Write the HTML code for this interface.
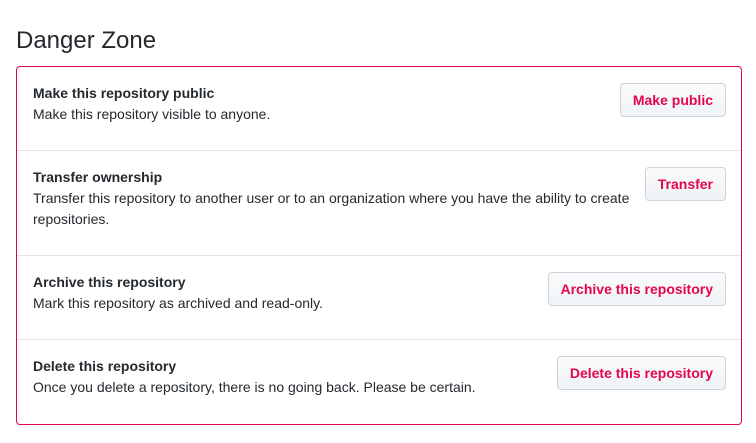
<!DOCTYPE html>
<html><head><style>
body{margin:0;background:#fff;font-family:"Liberation Sans",sans-serif;color:#24292e;}
h2{position:absolute;left:16px;top:26px;margin:0;font-size:24px;font-weight:400;line-height:30px;}
.box{position:absolute;left:16px;top:66px;width:724px;height:357px;border:1px solid #e4064a;border-radius:4px;}
.row{position:relative;border-top:1px solid #e1e4e8;padding:16px 16px 0 16px;box-sizing:border-box;}
.row:first-child{border-top:none;}
.t{font-weight:700;font-size:14px;line-height:21px;}
.d{font-size:14px;line-height:21px;width:610px;}
.b{position:absolute;right:15px;top:16px;height:34px;box-sizing:border-box;border:1px solid #cfd3d8;border-radius:4px;background:linear-gradient(#fafbfc,#eff3f6);color:#e4064a;font-weight:700;font-size:14px;line-height:32px;padding:0 12px;}
</style></head><body>
<h2>Danger Zone</h2>
<div class="box">
<div class="row" style="height:83px"><div class="t">Make this repository public</div><div class="d">Make this repository visible to anyone.</div><div class="b">Make public</div></div>
<div class="row" style="height:105px"><div class="t">Transfer ownership</div><div class="d">Transfer this repository to another user or to an organization where you have the ability to create repositories.</div><div class="b">Transfer</div></div>
<div class="row" style="height:84px"><div class="t">Archive this repository</div><div class="d">Mark this repository as archived and read-only.</div><div class="b">Archive this repository</div></div>
<div class="row" style="height:84px"><div class="t">Delete this repository</div><div class="d">Once you delete a repository, there is no going back. Please be certain.</div><div class="b">Delete this repository</div></div>
</div>
</body></html>
